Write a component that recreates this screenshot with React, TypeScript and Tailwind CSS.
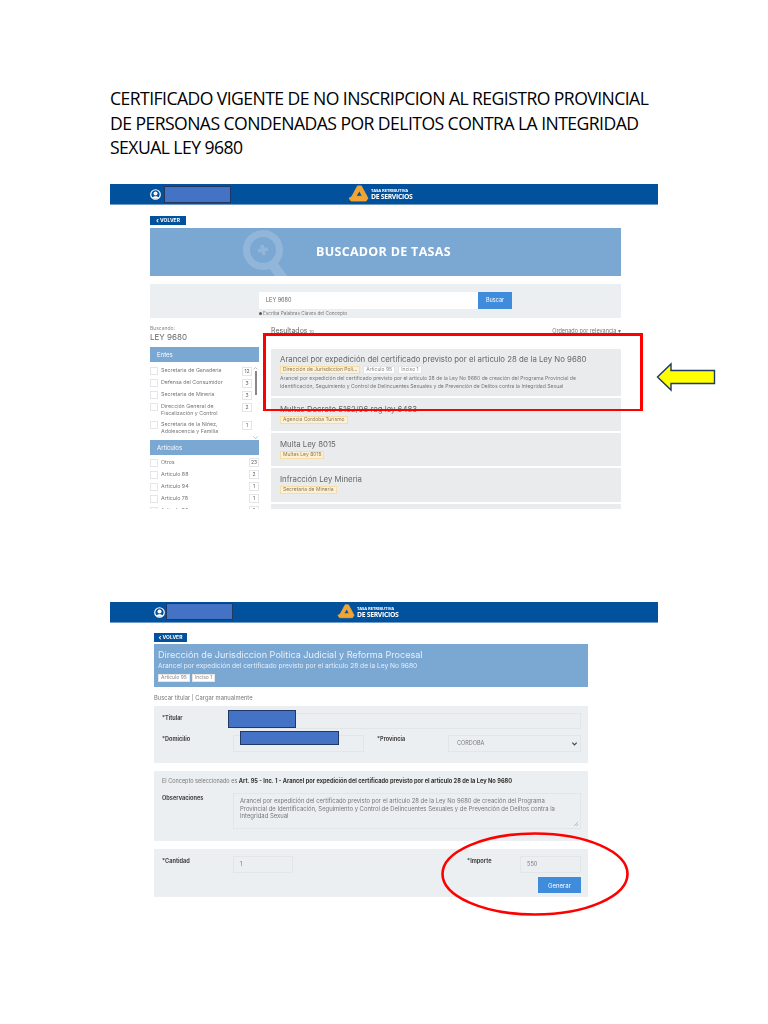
import React from "react";

const filtersEntes = [
  { label: "Secretaria de Ganaderia", count: "12", h: "h-[11px]" },
  { label: "Defensa del Consumidor", count: "3", h: "h-[11px]" },
  { label: "Secretaria de Mineria", count: "3", h: "h-[11px]" },
  { label: "Dirección General de Fiscalización y Control", count: "2", h: "h-[17px]" },
  { label: "Secretaria de la Niñez, Adolescencia y Familia", count: "1", h: "h-[17px]" },
];

const filtersArticulos = [
  { label: "Otros", count: "23" },
  { label: "Articulo 88", count: "2" },
  { label: "Articulo 94", count: "1" },
  { label: "Articulo 78", count: "1" },
  { label: "Articulo 95", count: "1" },
];

const results = [
  { title: "Multas Decreto 5162/96 reg ley 6483", tag: "Agencia Cordoba Turismo", h: "h-[33px]" },
  { title: "Multa Ley 8015", tag: "Multas Ley 8015", h: "h-[33px]" },
  { title: "Infracción Ley Mineria", tag: "Secretaria de Mineria", h: "h-[34px]" },
];

const Redacted = ({ className }: { className: string }) => (
  <div className={`absolute bg-[#4472c4] border border-[#1f3864] ${className}`} />
);

const Logo = ({ size }: { size: number }) => (
  <svg width={size} height={size * 0.85} viewBox="0 0 22 19" className="shrink-0">
    <path
      d="M10 1 L14 1 L21 14 L19 17 L3 17 L1 14 L5 12 L15 12 L12 6 L7 14 L3 14 Z"
      fill="#f0a534"
      stroke="#f0a534"
      strokeLinejoin="round"
    />
  </svg>
);

const UserIcon = () => (
  <svg width="11" height="11" viewBox="0 0 12 12" className="shrink-0">
    <circle cx="6" cy="6" r="5.2" fill="none" stroke="#fff" strokeWidth="1.3" />
    <circle cx="6" cy="4.8" r="2.2" fill="#fff" />
    <path d="M2.4 9.6 C3.4 7.4 8.6 7.4 9.6 9.6 C8 11 4 11 2.4 9.6 Z" fill="#fff" />
  </svg>
);

const NavBar = ({ iconPad, logoPad, logoSize }: { iconPad: string; logoPad: string; logoSize: number }) => (
  <div className="h-[21px] bg-[#02519c] border-b border-[#6f9bc9] flex items-center">
    <div className={iconPad}>
      <UserIcon />
    </div>
    <div className={`flex items-center gap-[2px] ${logoPad}`}>
      <Logo size={logoSize} />
      <div className="text-white font-bold leading-[6px] font-['Open_Sans',sans-serif]">
        <div className="text-[4.2px] tracking-[-0.1px]">TASA RETRIBUTIVA</div>
        <div className="text-[6.8px] tracking-[-0.3px]">DE SERVICIOS</div>
      </div>
    </div>
  </div>
);

const Volver = ({ className }: { className: string }) => (
  <div
    className={`h-[9px] bg-[#02519c] text-white text-[5px] font-bold flex items-center justify-center gap-[1px] ${className}`}
  >
    <span className="text-[7px] leading-none">‹</span>
    <span>VOLVER</span>
  </div>
);

const Check = () => <div className="w-[8px] h-[8px] bg-white border border-[#e3e5e8] shrink-0" />;

const Count = ({ n }: { n: string }) => (
  <div className="ml-auto w-[10px] h-[9px] bg-white border border-[#e3e5e8] text-[5px] text-[#666] flex items-center justify-center shrink-0">
    {n}
  </div>
);

const Tag = ({ children, white }: { children: React.ReactNode; white?: boolean }) => (
  <span
    className={`h-[8px] px-[2px] flex items-center text-[5px] whitespace-nowrap border ${
      white
        ? "bg-white border-[#e6e6e6] text-[#888]"
        : "bg-[#fdf0d5] border-[#f8dca6] text-[#8a7a5a]"
    }`}
  >
    {children}
  </span>
);

const FirstCapture = () => (
  <section className="h-[325px] overflow-hidden mt-[27px] blur-[0.3px]">
    <NavBar iconPad="pl-[40px]" logoPad="pl-[187px]" logoSize={21} />
    <div className="w-[471px] ml-[40px]">
      <Volver className="w-[36px] mt-[11px]" />
      <div className="relative h-[48px] mt-[3px] bg-[#7ba7d3] overflow-hidden flex items-center pl-[166px]">
        <svg width="60" height="48" viewBox="0 0 60 48" className="absolute left-[90px] top-0">
          <circle cx="23" cy="22" r="16.5" fill="none" stroke="#91b6da" strokeWidth="7" />
          <path d="M33 37 L44 52" stroke="#91b6da" strokeWidth="10" />
          <path d="M18 23 L28 21 M22 17 L24 27" stroke="#91b6da" strokeWidth="3.5" />
        </svg>
        <span className="relative text-white font-bold text-[12.5px] tracking-[0.3px] mt-[1px] font-['Open_Sans',sans-serif]">
          BUSCADOR DE TASAS
        </span>
      </div>
      <div className="h-[34px] mt-[8px] bg-[#eceff1] pl-[109px] pt-[8px]">
        <div className="flex">
          <div className="w-[219px] h-[17px] bg-white flex items-center pl-[7px] text-[5.5px] text-[#666]">
            LEY 9680
          </div>
          <div className="w-[34px] h-[17px] bg-[#3f8bdc] text-white text-[5.5px] flex items-center justify-center">
            Buscar
          </div>
        </div>
        <div className="flex items-center gap-[1px] text-[4.7px] text-[#777] mt-[1px]">
          <span className="w-[3px] h-[3px] rounded-full bg-[#555]" />
          Escriba Palabras Claves del Concepto
        </div>
      </div>
      <div className="flex mt-[6px]">
        <aside className="w-[109px] shrink-0">
          <div className="text-[5px] text-[#888] leading-[8px]">Buscando:</div>
          <div className="text-[8px] text-[#666] leading-[10px]">LEY 9680</div>
          <div className="h-[15px] mt-[5px] bg-[#7ba7d3] text-white text-[6px] flex items-center pl-[7px]">
            Entes
          </div>
          <div className="relative h-[73px] mt-[5px] pr-[7px] flex flex-col">
            {filtersEntes.map((f) => (
              <div key={f.label} className={`flex items-start gap-[3px] mb-[1px] ${f.h}`}>
                <Check />
                <span className="text-[5.3px] leading-[6.5px] text-[#777] w-[66px]">{f.label}</span>
                <Count n={f.count} />
              </div>
            ))}
            <div className="absolute right-[2px] top-[4px] w-[2px] h-[24px] bg-[#888]" />
            <svg width="5" height="3" viewBox="0 0 5 3" className="absolute right-[1px] top-0">
              <path d="M0.5 2.5 L2.5 0.5 L4.5 2.5" fill="none" stroke="#999" strokeWidth="0.6" />
            </svg>
            <svg width="5" height="3" viewBox="0 0 5 3" className="absolute right-[1px] bottom-[1px]">
              <path d="M0.5 0.5 L2.5 2.5 L4.5 0.5" fill="none" stroke="#999" strokeWidth="0.6" />
            </svg>
          </div>
          <div className="h-[15px] bg-[#7ba7d3] text-white text-[6px] flex items-center pl-[7px]">
            Articulos
          </div>
          <div className="mt-[3px] flex flex-col gap-[3px]">
            {filtersArticulos.map((f) => (
              <div key={f.label} className="flex items-center gap-[3px] h-[9px]">
                <Check />
                <span className="text-[5.3px] text-[#777]">{f.label}</span>
                <Count n={f.count} />
              </div>
            ))}
          </div>
        </aside>
        <div className="flex-1 ml-[12px]">
          <div className="flex justify-between items-center h-[11px] mt-[2px]">
            <span className="text-[7px] text-[#666]">
              Resultados <span className="text-[4px]">10</span>
            </span>
            <span className="text-[5.5px] text-[#777]">Ordenado por relevancia ▾</span>
          </div>
          <div className="mt-[12px] h-[47px] bg-[#e9ebed] pl-[9px] pt-[5px]">
            <div className="text-[7.8px] text-[#666] leading-[10px] whitespace-nowrap">
              Arancel por expedición del certificado previsto por el articulo 28 de la Ley No 9680
            </div>
            <div className="flex gap-[3px] mt-[2px]">
              <Tag>Dirección de Jurisdiccion Poli...</Tag>
              <Tag white>Articulo 95</Tag>
              <Tag white>Inciso 1</Tag>
            </div>
            <p className="text-[5.1px] leading-[7.6px] text-[#777] mt-[1px] whitespace-nowrap">
              Arancel por expedición del certificado previsto por el articulo 28 de la Ley No 9680 de creación del Programa Provincial de
              <br />
              Identificación, Seguimiento y Control de Delincuentes Sexuales y de Prevención de Delitos contra la Integridad Sexual
            </p>
          </div>
          {results.map((r) => (
            <div key={r.title} className={`mt-[2px] bg-[#e9ebed] pl-[9px] pt-[6px] ${r.h}`}>
              <div className="text-[7.8px] text-[#666] leading-[10px]">{r.title}</div>
              <div className="flex mt-[2px]">
                <Tag>{r.tag}</Tag>
              </div>
            </div>
          ))}
          <div className="mt-[2px] h-[10px] bg-[#e9ebed]" />
        </div>
      </div>
    </div>
  </section>
);

const SecondCapture = () => (
  <section className="mt-[93px] blur-[0.3px]">
    <NavBar iconPad="pl-[44px]" logoPad="pl-[172px]" logoSize={18} />
    <div className="w-[434px] ml-[44px]">
      <Volver className="w-[33px] mt-[10px]" />
      <div className="h-[43px] mt-[2px] bg-[#7ba7d3] pl-[4px] pt-[4px]">
        <div className="text-[9.1px] leading-[13px] text-[#e7f0f8] whitespace-nowrap">
          Dirección de Jurisdiccion Politica Judicial y Reforma Procesal
        </div>
        <div className="text-[6.6px] leading-[11px] text-[#e7f0f8] whitespace-nowrap">
          Arancel por expedición del certificado previsto por el artículo 28 de la Ley No 9680
        </div>
        <div className="flex gap-[2px] mt-[2px]">
          <Tag white>Artículo 95</Tag>
          <Tag white>Inciso 1</Tag>
        </div>
      </div>
      <div className="text-[5.8px] leading-[8px] text-[#777] mt-[7px]">Buscar titular | Cargar manualmente</div>
      <div className="h-[57px] mt-[4px] bg-[#eceff1] pl-[8px] pr-[7px] pt-[7px]">
        <div className="flex items-start">
          <span className="w-[71px] text-[5.5px] font-bold text-[#444] mt-[1px]">*Titular</span>
          <div className="flex-1 h-[16px] border border-[#e3e6e8]" />
        </div>
        <div className="flex items-start mt-[6px]">
          <span className="w-[71px] text-[5.5px] font-bold text-[#444]">*Domicilio</span>
          <div className="w-[131px] h-[17px] border border-[#e3e6e8]" />
          <span className="w-[71px] ml-[13px] text-[5.5px] font-bold text-[#444]">*Provincia</span>
          <div className="flex-1 h-[17px] border border-[#e3e6e8] flex items-center justify-between pl-[8px] pr-[2px] text-[5.5px] text-[#777]">
            CORDOBA
            <svg width="7" height="7" viewBox="0 0 8 8">
              <path d="M1.5 3 L4 5.5 L6.5 3" fill="none" stroke="#444" strokeWidth="1.4" />
            </svg>
          </div>
        </div>
      </div>
      <div className="h-[70px] mt-[8px] bg-[#eceff1] pl-[8px] pr-[7px] pt-[6px]">
        <div className="text-[5.5px] leading-[8px] text-[#777] whitespace-nowrap">
          El Concepto seleccionado es{" "}
          <b className="text-[#333] text-[5.7px]">
            Art. 95 - Inc. 1 - Arancel por expedición del certificado previsto por el artículo 28 de la Ley No 9680
          </b>
        </div>
        <div className="flex items-start mt-[8px]">
          <span className="w-[71px] text-[5.6px] font-bold text-[#444] mt-[1px]">Observaciones</span>
          <div className="relative flex-1 h-[36px] border border-[#e3e6e8] pl-[6px] pt-[3px] text-[5.9px] leading-[7.7px] text-[#777] whitespace-nowrap">
            Arancel por expedición del certificado previsto por el articulo 28 de la Ley No 9680 de creación del Programa
            <br />
            Provincial de Identificación, Seguimiento y Control de Delincuentes Sexuales y de Prevención de Delitos contra la
            <br />
            Integridad Sexual
            <svg width="6" height="6" viewBox="0 0 6 6" className="absolute right-[1px] bottom-[1px]">
              <path d="M1 5 L5 1 M3 5 L5 3" stroke="#999" strokeWidth="0.6" />
            </svg>
          </div>
        </div>
      </div>
      <div className="h-[48px] mt-[8px] bg-[#eceff1] pl-[8px] pr-[7px] pt-[7px] flex">
        <span className="w-[71px] text-[5.6px] font-bold text-[#444] mt-[1px]">*Cantidad</span>
        <div className="w-[60px] h-[17px] border border-[#e3e6e8] flex items-center pl-[6px] text-[5.6px] text-[#777]">
          1
        </div>
        <div className="ml-auto flex flex-col items-end">
          <div className="flex">
            <span className="w-[53px] text-[5.6px] font-bold text-[#444] mt-[1px]">*Importe</span>
            <div className="w-[61px] h-[17px] border border-[#e3e6e8] flex items-center pl-[6px] text-[5.6px] text-[#777]">
              550
            </div>
          </div>
          <div className="w-[43px] h-[16px] mt-[4px] bg-[#3f8bdc] text-white text-[6px] flex items-center justify-center">
            Generar
          </div>
        </div>
      </div>
    </div>
  </section>
);

export default function App() {
  return (
    <div className="relative w-[768px] h-[1024px] bg-white overflow-hidden font-['Inter','Open_Sans',sans-serif]">
      <div className="pt-[86px] px-[110px] w-[768px]">
        <h1 className="text-[17.6px] leading-[24.5px] h-[71px] tracking-[-0.56px] text-black font-['Open_Sans',sans-serif]">
          CERTIFICADO VIGENTE DE NO INSCRIPCION AL REGISTRO PROVINCIAL
          <br />
          DE PERSONAS CONDENADAS POR DELITOS CONTRA LA INTEGRIDAD
          <br />
          SEXUAL LEY 9680
        </h1>
        <FirstCapture />
        <SecondCapture />
      </div>

      {/* annotations drawn on top of the captures */}
      <Redacted className="left-[164px] top-[186px] w-[67px] h-[17px]" />
      <Redacted className="left-[166px] top-[603px] w-[67px] h-[17px]" />
      <Redacted className="left-[228px] top-[710px] w-[68px] h-[18px]" />
      <Redacted className="left-[240px] top-[731px] w-[99px] h-[14px]" />

      <div className="absolute left-[263px] top-[333px] w-[380px] h-[78px] border-[3px] border-b-2 border-[#ff0000]" />

      <svg width="60" height="30" viewBox="0 0 60 30" className="absolute left-[656px] top-[362px]">
        <path d="M1.5 15 L15 2 L15 8.5 L58.5 8.5 L58.5 21.5 L15 21.5 L15 28 Z" fill="#ffff00" stroke="#1f3864" strokeWidth="1.4" />
      </svg>

      <svg width="190" height="86" viewBox="0 0 190 86" className="absolute left-[440px] top-[831px]">
        <ellipse cx="95" cy="43" rx="92.5" ry="40.5" fill="none" stroke="#ff0000" strokeWidth="2.6" />
      </svg>
    </div>
  );
}
